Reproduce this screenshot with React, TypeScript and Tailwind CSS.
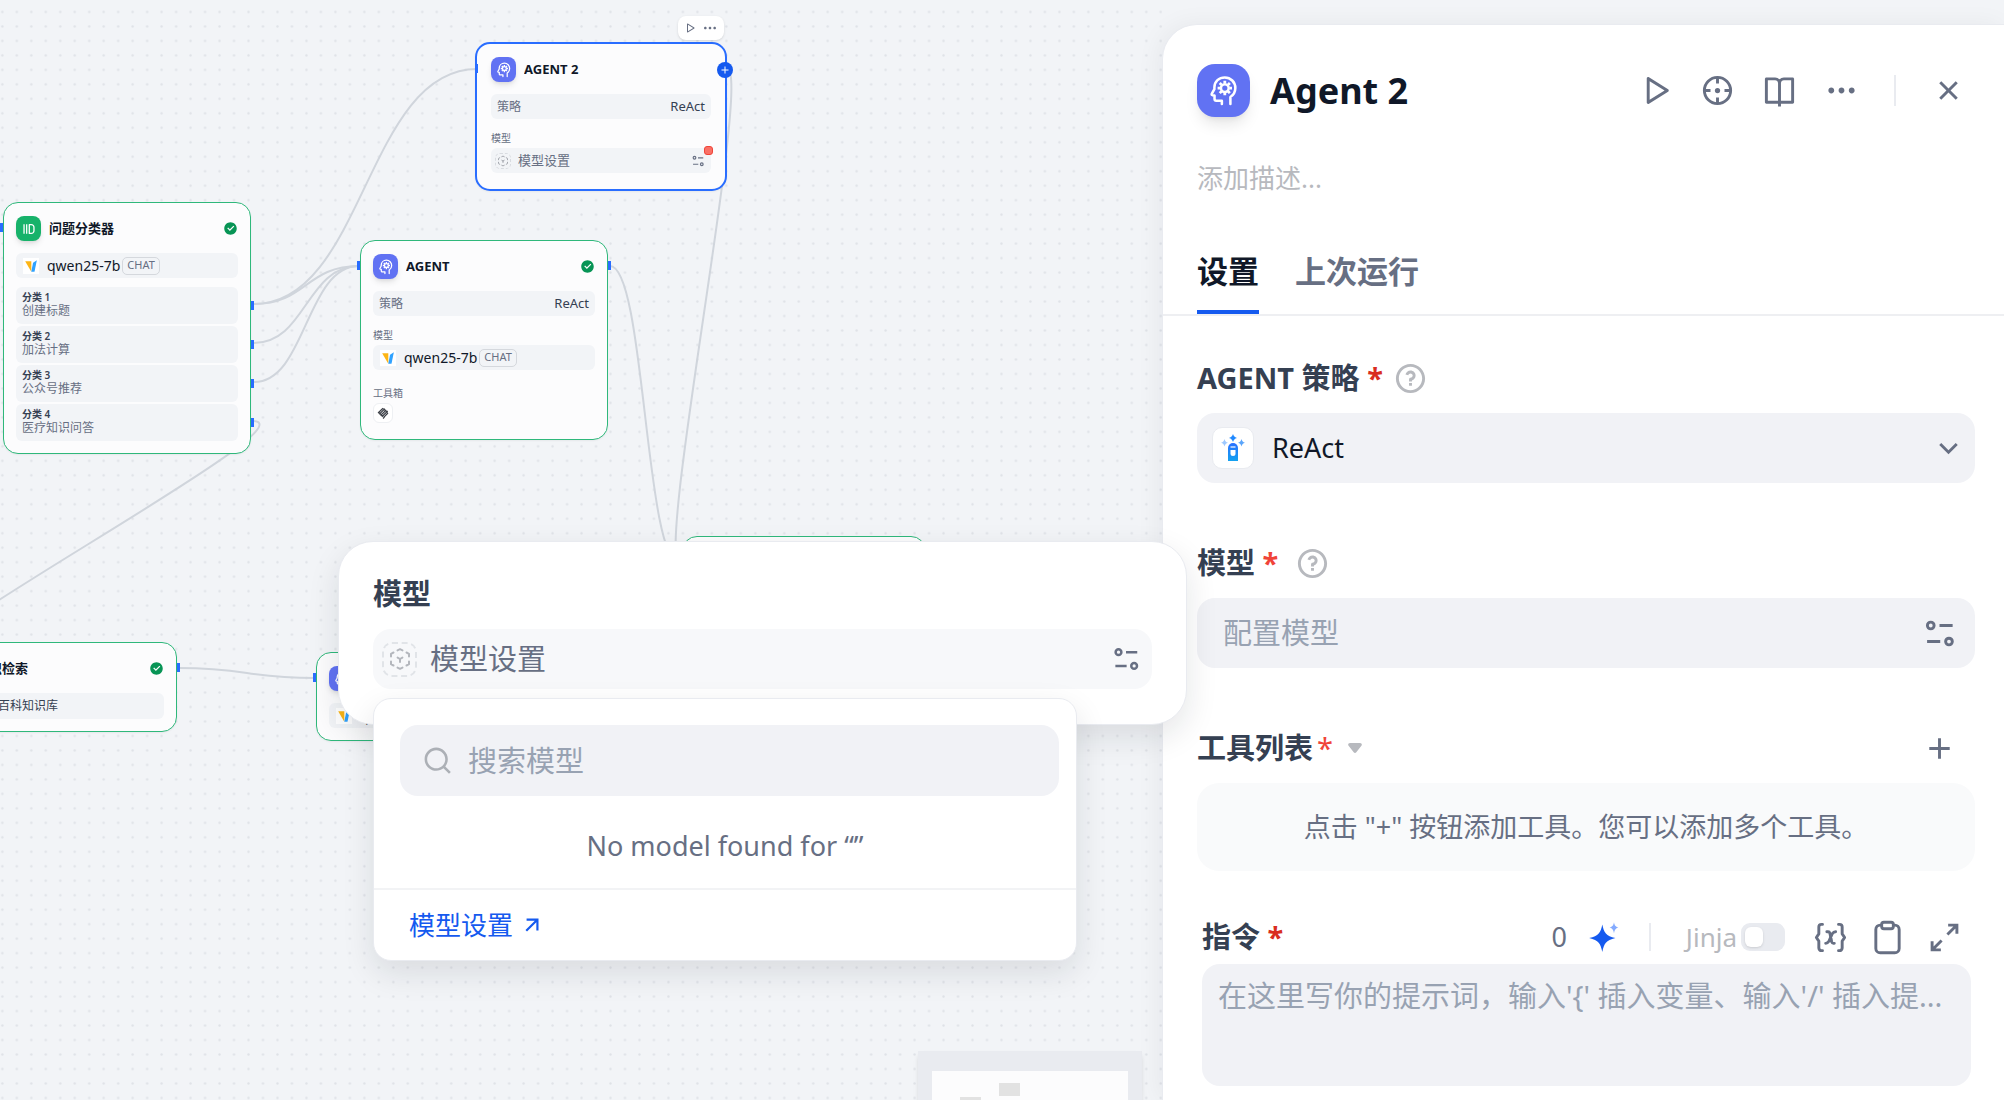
import type { ReactNode } from 'react';
import {
  RiAddLine,
  RiArrowDownSLine,
  RiArrowRightUpLine,
  RiBookOpenLine,
  RiCheckboxCircleFill,
  RiCloseLine,
  RiMoreFill,
  RiPlayLargeLine,
  RiQuestionLine,
  RiSearchLine,
} from 'react-icons/ri';

type IconProps = { className?: string };

const AgentIcon = ({ className }: IconProps) => (
  <svg viewBox="0 0 24 24" fill="none" stroke="currentColor" className={className}>
    <path
      d="M16.8 21.8V16.5C19.2 15 20.5 12.6 20.5 9.8C20.5 5.3 17 1.8 12.6 1.8C8.2 1.8 4.9 4.9 4.8 9.2V10.6L2.8 14.2C2.6 14.7 2.9 15 3.3 15.1L4.9 15.4V18C4.9 18.8 5.4 19.3 6.2 19.3H10.4V21.8"
      strokeWidth="1.9"
      strokeLinejoin="round"
      strokeLinecap="round"
    />
    <circle cx="12.6" cy="9.8" r="2.9" strokeWidth="1.9" />
    <path
      d="M12.6 4.4v2M12.6 13.2v2M7.2 9.8h2M16 9.8h2M8.8 6l1.4 1.4M15 12.2l1.4 1.4M8.8 13.6l1.4-1.4M15 7.4L16.4 6"
      strokeWidth="2.1"
    />
  </svg>
);

const ClassifierIcon = ({ className }: IconProps) => (
  <svg viewBox="0 0 24 24" fill="none" stroke="currentColor" strokeWidth="2.2" className={className}>
    <path
      d="M3.5 4v16M8 4v16M12.5 4.500h3.500a4.500 4.500 0 0 1 4.500 4.500v6a4.500 4.500 0 0 1-4.500 4.500h-3.500z"
      strokeLinejoin="round"
    />
  </svg>
);

const VllmIcon = ({ className }: IconProps) => (
  <svg viewBox="0 0 24 24" className={className}>
    <path d="M2 4h10.5v18z" fill="#fdb515" />
    <path d="M12.5 22L15.500 6.500 22 2l-4 20z" fill="#30a2ff" />
  </svg>
);

const SlidersIcon = ({ className }: IconProps) => (
  <svg viewBox="0 0 24 24" fill="none" stroke="currentColor" strokeWidth="2" className={className}>
    <circle cx="6" cy="6.5" r="2.300" />
    <path d="M12 6.500h9M3.500 17.500h9" />
    <circle cx="18.500" cy="17.500" r="2.300" />
  </svg>
);

const TargetIcon = ({ className }: IconProps) => (
  <svg viewBox="0 0 24 24" fill="none" stroke="currentColor" strokeWidth="2" className={className}>
    <circle cx="12" cy="12" r="9" />
    <path d="M12 3v4.200M12 16.800V21M3 12h4.200M16.800 12H21" />
    <circle cx="12" cy="12" r="1.800" fill="currentColor" stroke="none" />
  </svg>
);

const CubeIcon = ({ className }: IconProps) => (
  <svg
    viewBox="0 0 24 24"
    fill="none"
    stroke="currentColor"
    strokeWidth="2"
    strokeLinecap="round"
    strokeLinejoin="round"
    className={className}
  >
    <path d="M9.500 3.400L12 2.200l2.500 1.200M18.500 5.500L21 6.800v2.700M21 14.500v2.700l-2.500 1.300M14.500 20.600L12 21.800l-2.500-1.200M5.500 18.500L3 17.200v-2.700M3 9.500V6.800l2.500-1.300M12 12l2.400-1.400M12 12l-2.400-1.400M12 12v3" />
  </svg>
);

const SparkleIcon = ({ className }: IconProps) => (
  <svg viewBox="0 0 24 24" className={className}>
    <path
      d="M10.500 3c1.100 5.500 2.500 8 9 9.300-6.500 1.500-7.900 4-9 9.700-1.100-5.700-2.500-8.200-9-9.700 6.500-1.300 7.900-3.800 9-9.300z"
      fill="#155aef"
    />
    <path
      d="M18.500 1.500c.4 2.300 1 3 3 3.700-2 .6-2.600 1.600-3 3.800-.4-2.200-1-3.200-3-3.800 2-.7 2.600-1.400 3-3.700z"
      fill="#84abff"
    />
  </svg>
);

const VariableIcon = ({ className }: IconProps) => (
  <svg
    viewBox="0 0 24 24"
    fill="none"
    stroke="currentColor"
    strokeWidth="2"
    strokeLinecap="round"
    strokeLinejoin="round"
    className={className}
  >
    <path d="M6.500 3H5.800A1.800 1.800 0 0 0 4 4.800v4.700L2.300 12 4 14.500v4.700A1.800 1.800 0 0 0 5.800 21h.7M17.500 3h.7A1.800 1.800 0 0 1 20 4.800v4.700l1.700 2.500-1.700 2.500v4.700a1.800 1.800 0 0 1-1.800 1.800h-.7" />
    <path d="M9.500 8h.8c.7 0 1.100.4 1.300 1l1.200 6c.2.600.6 1 1.200 1h.6M15.500 8c-1.100 0-1.700.5-2.300 1.400l-2.300 5.200c-.6.900-1.200 1.400-2.200 1.400" />
  </svg>
);

const ClipboardIcon = ({ className }: IconProps) => (
  <svg
    viewBox="0 0 24 24"
    fill="none"
    stroke="currentColor"
    strokeWidth="2"
    strokeLinejoin="round"
    className={className}
  >
    <rect x="4" y="3.500" width="16" height="19" rx="3" />
    <rect x="8" y="1.500" width="8" height="4.500" rx="1.500" fill="#fff" />
  </svg>
);

const ExpandIcon = ({ className }: IconProps) => (
  <svg viewBox="0 0 24 24" fill="none" stroke="currentColor" strokeWidth="2" className={className}>
    <path d="M14.500 3.500h6v6M20 4l-6 6M9.500 20.500h-6v-6M4 20l6-6" />
  </svg>
);

const ReactStrategyIcon = ({ className }: IconProps) => (
  <svg viewBox="0 0 24 28" className={className}>
    <defs>
      <linearGradient id="wand" x1="0" y1="0" x2="0" y2="1">
        <stop offset="0" stopColor="#2970ff" />
        <stop offset="1" stopColor="#14a2f0" />
      </linearGradient>
    </defs>
    <path d="M7 27V14a5 5 0 0 1 10 0v13z" fill="url(#wand)" />
    <path d="M9.500 13h5" stroke="#fff" strokeWidth="1.200" />
    <path d="M9.500 16h5v3.500a2.500 2.500 0 0 1-5 0z" fill="#fff" />
    <path
      d="M12 0c.8 2.400 1.600 3.200 4 4-2.400.8-3.200 1.600-4 4-.8-2.400-1.600-3.200-4-4 2.400-.8 3.200-1.600 4-4z"
      fill="#2089ff"
    />
    <path
      d="M3.500 5c.7 2.300 1.400 3 3.500 3.700-2.100.7-2.800 1.400-3.500 3.700C2.800 10.100 2.100 9.400 0 8.700 2.100 8 2.800 7.300 3.500 5z"
      fill="#9ec9ff"
    />
    <path
      d="M20.500 5c.7 2.300 1.400 3 3.500 3.700-2.100.7-2.800 1.400-3.500 3.700-.7-2.300-1.400-3-3.500-3.700 2.100-.7 2.800-1.400 3.500-3.700z"
      fill="#5aa5fb"
    />
  </svg>
);

const ToolIcon = ({ className }: IconProps) => (
  <svg viewBox="0 0 24 24" fill="none" stroke="#3c3f46" strokeWidth="2.200" className={className}>
    <path d="M2 12L12 2.500M4.500 14.500l11-11M7 17L18.500 6M9.500 19.500l12-11.500M13 21l9-9M12 23l3-3M3 10l9 9M13 3l8 8" />
  </svg>
);

type NodeProps = {
  title: string;
  icon?: ReactNode;
  position: string;
  border?: string;
  status?: boolean;
  children?: ReactNode;
};

const Node = ({
  title,
  icon,
  position,
  border = 'border border-[#2fb87b] px-3',
  status = true,
  children,
}: NodeProps) => (
  <div className={`absolute rounded-[15px] bg-[#fcfcfd] pt-[13px] shadow-xs ${border} ${position}`}>
    <div className="flex h-[25px] items-center gap-2">
      {icon}
      <h3 className="flex-1 truncate text-[13px] font-bold text-[#101828]">{title}</h3>
      {status && <RiCheckboxCircleFill className="size-[15px] text-[#079455]" />}
    </div>
    {children}
  </div>
);

const AgentBadge = () => (
  <span className="flex size-[25px] shrink-0 items-center justify-center rounded-lg bg-[#6172f3] text-white shadow-md">
    <AgentIcon className="size-4" />
  </span>
);

const ModelRow = ({ className = '' }: IconProps) => (
  <div className={`flex h-[25px] items-center rounded-md bg-[#f2f4f7] pl-[7px] ${className}`}>
    <span className="flex size-4 items-center justify-center bg-white">
      <VllmIcon className="size-3.5" />
    </span>
    <span className="ml-2 text-[14px] text-[#101828]">qwen25-7b</span>
    <span className="ml-0.5 flex h-[18px] items-center rounded-[5px] border border-[#d5d8dd] px-1 text-[11px] text-[#676f83]">
      CHAT
    </span>
  </div>
);

const StrategyRow = () => (
  <div className="mt-3 flex h-[25px] items-center justify-between rounded-md bg-[#f2f4f7] px-1.5">
    <span className="text-xs text-[#676f83]">策略</span>
    <span className="text-[13px] text-[#354052]">ReAct</span>
  </div>
);

const Handle = ({ className = '' }: IconProps) => (
  <span className={`absolute h-[9px] w-[3px] bg-[#296dff] ${className}`} />
);

const classes = [
  { name: '分类 1', topic: '创建标题' },
  { name: '分类 2', topic: '加法计算' },
  { name: '分类 3', topic: '公众号推荐' },
  { name: '分类 4', topic: '医疗知识问答' },
];

const edges = [
  'M254 304C364 304 366 69 477 69',
  'M254 304C306 304 306 266 359 266',
  'M254 343C306 343 306 266 359 266',
  'M254 382C306 382 306 266 359 266',
  'M252 421C324 421-147 667-75 667',
  'M610 266C645 266 645 564 680 564',
  'M727 69C753 69 654 564 680 564',
  'M179 668C247 668 247 678 315 678',
];

const Canvas = () => (
  <main className="relative min-w-0 flex-1 overflow-hidden">
    <svg className="absolute inset-0 size-full">
      <defs>
        <pattern id="dots" x="-4.900" y="4.700" width="14.480" height="14.480" patternUnits="userSpaceOnUse">
          <circle cx="7.240" cy="7.240" r="1.200" fill="#dfe2e7" />
        </pattern>
      </defs>
      <rect width="100%" height="100%" fill="url(#dots)" />
      {edges.map((d) => (
        <path key={d} d={d} fill="none" stroke="#d0d5dc" strokeWidth="2" />
      ))}
    </svg>

    <Node
      title="问题分类器"
      position="left-[3px] top-[202px] w-[248px] pb-3"
      icon={
        <span className="flex size-[25px] shrink-0 items-center justify-center rounded-lg bg-[#17b26a] text-white shadow-md">
          <ClassifierIcon className="size-3.5" />
        </span>
      }
    >
      <ModelRow className="mt-3" />
      <ul className="mt-[9px] flex flex-col gap-0.5">
        {classes.map((item) => (
          <li key={item.name} className="relative h-[37px] rounded-md bg-[#f2f4f7] px-1.5 pt-1">
            <p className="text-[10px] leading-[13px] font-semibold text-[#354052]">{item.name}</p>
            <p className="text-xs leading-[13px] text-[#676f83]">{item.topic}</p>
            <Handle className="top-[14px] -right-4" />
          </li>
        ))}
      </ul>
      <Handle className="top-5 -left-1" />
    </Node>

    <Node title="AGENT" position="left-[360px] top-[240px] w-[248px] pb-4" icon={<AgentBadge />}>
      <StrategyRow />
      <p className="mt-[11px] text-[10px] leading-4 text-[#676f83]">模型</p>
      <ModelRow className="mt-0.5" />
      <p className="mt-[15px] text-[10px] leading-4 text-[#676f83]">工具箱</p>
      <span className="mt-0.5 flex size-5 items-center justify-center rounded-md border border-[#eef0f3] bg-white">
        <ToolIcon className="size-3" />
      </span>
      <Handle className="top-5 -left-1" />
      <Handle className="top-5 -right-1" />
    </Node>

    <Node
      title="AGENT 2"
      position="left-[475px] top-[42px] w-[252px] pb-4"
      border="border-2 border-[#296dff] px-3.5"
      status={false}
      icon={<AgentBadge />}
    >
      <StrategyRow />
      <p className="mt-[11px] text-[10px] leading-4 text-[#676f83]">模型</p>
      <div className="relative mt-0.5 flex h-[25px] items-center rounded-md bg-[#f2f4f7] pr-1.5 pl-1 text-[#676f83]">
        <span className="flex size-4 items-center justify-center rounded-[5px] border border-dashed border-[#d8dbe0] text-[#a6a9b0]">
          <CubeIcon className="size-3" />
        </span>
        <span className="ml-[7px] flex-1 text-[13px]">模型设置</span>
        <SlidersIcon className="size-3.5" />
        <span className="absolute -top-0.5 -right-0.5 size-[9px] rounded-[3px] border border-[#f04438] bg-[#f97066]" />
      </div>
      <Handle className="top-5 -left-0.5" />
      <button
        type="button"
        aria-label="添加节点"
        className="absolute top-[18px] -right-2 flex size-4 items-center justify-center rounded-full bg-[#155aef] text-white"
      >
        <RiAddLine className="size-3" />
      </button>
    </Node>
    <div className="absolute top-4 left-[678px] flex h-6 w-[46px] items-center justify-between rounded-lg bg-white px-1.5 text-[#676f83] shadow-sm">
      <button type="button" aria-label="运行节点">
        <RiPlayLargeLine className="size-3" />
      </button>
      <button type="button" aria-label="更多">
        <RiMoreFill className="size-4" />
      </button>
    </div>

    <Node title="知识检索" position="-left-[70px] top-[642px] w-[247px] pb-3" icon={<AgentBadge />}>
      <div className="mt-3 flex h-[26px] items-center rounded-md bg-[#f2f4f7] pl-[55px] text-xs text-[#354052]">
        百科知识库
      </div>
      <Handle className="top-5 -right-1" />
    </Node>

    <Node title="AGENT 3" position="left-[316px] top-[652px] w-[248px] pb-3" icon={<AgentBadge />}>
      <ModelRow className="mt-3" />
      <Handle className="top-5 -left-1" />
    </Node>

    <Node title="LLM" position="left-[682px] top-[536px] w-[244px] pb-3" />

    {/* minimap */}
    <div className="absolute top-[1051px] left-[918px] h-[148px] w-[224px] bg-[#e9ebf0] px-3.5 py-5 shadow-md">
      <div className="relative h-full bg-[#fcfcfd]">
        <span className="absolute top-3 left-[67px] h-[13px] w-[21px] bg-[#e2e2e2]" />
        <span className="absolute top-[26px] left-7 h-[13px] w-[21px] bg-[#e2e2e2]" />
      </div>
    </div>
  </main>
);

const Label = ({ htmlFor, children }: { htmlFor?: string; children: ReactNode }) => (
  <label htmlFor={htmlFor} className="text-[29px] leading-9 font-bold text-[#354052]">
    {children}
  </label>
);

const NodePanel = () => (
  <aside className="z-10 mt-6 flex w-[842px] shrink-0 flex-col rounded-tl-[35px] border-t border-l border-[#e9ebf0] bg-white shadow-[-4px_0_24px_rgba(16,24,40,0.05)]">
    <header className="flex items-center pt-[39px] pr-[38px] pl-[34px]">
      <span className="flex size-[53px] items-center justify-center rounded-[18px] bg-[#6172f3] text-white shadow-lg">
        <AgentIcon className="size-8" />
      </span>
      <h2 className="ml-5 flex-1 text-[36px] leading-[53px] font-bold text-[#101828]">Agent 2</h2>
      <div className="flex items-center gap-[27px] text-[#676f83]">
        <button type="button" aria-label="运行此步骤">
          <RiPlayLargeLine className="size-[35px]" />
        </button>
        <button type="button" aria-label="定位节点">
          <TargetIcon className="size-[35px]" />
        </button>
        <button type="button" aria-label="帮助文档">
          <RiBookOpenLine className="size-[35px]" />
        </button>
        <button type="button" aria-label="更多">
          <RiMoreFill className="size-[35px]" />
        </button>
      </div>
      <span className="mx-[35px] h-[31px] w-0.5 bg-[#e9ebf0]" />
      <button type="button" aria-label="关闭" className="text-[#676f83]">
        <RiCloseLine className="size-[35px]" />
      </button>
    </header>

    <p className="mt-[43px] pl-[34px] text-[26px] leading-9 text-[#b7b9be]">添加描述...</p>

    <nav className="mt-[53px] flex gap-9 border-b-2 border-[#eeeff2] pl-[34px] text-[31px] leading-[44px] font-bold">
      <button type="button" className="border-b-4 border-[#155aef] pb-[17px] text-[#101828]">
        设置
      </button>
      <button type="button" className="border-b-4 border-transparent pb-[17px] text-[#676f83]">
        上次运行
      </button>
    </nav>

    <form className="flex flex-col pt-11 pr-[29px] pl-[34px]">
      <div className="flex items-center">
        <Label htmlFor="strategy">
          AGENT 策略 <span className="text-[#d92d20]">*</span>
        </Label>
        <RiQuestionLine className="ml-2.5 size-[35px] text-[#b7b9be]" />
      </div>
      <div className="mt-[17px] flex h-[70px] items-center rounded-[18px] bg-[#f1f2f6] pr-[9px] pl-[15px]">
        <span className="flex size-[42px] items-center justify-center rounded-[10px] border border-[#e9ebf0] bg-white">
          <ReactStrategyIcon className="h-7 w-6" />
        </span>
        <select id="strategy" className="ml-[18px] flex-1 appearance-none bg-transparent text-[27px] text-[#101828]">
          <option>ReAct</option>
        </select>
        <RiArrowDownSLine className="size-[35px] text-[#676f83]" />
      </div>

      <div className="mt-[62px] flex items-center">
        <Label htmlFor="model">
          模型 <span className="text-[#f04438]">*</span>
        </Label>
        <RiQuestionLine className="ml-[17px] size-[35px] text-[#b7b9be]" />
      </div>
      <div className="mt-[17px] flex h-[70px] items-center rounded-[18px] bg-[#f1f2f6] pr-[18px] pl-[26px]">
        <input
          id="model"
          readOnly
          placeholder="配置模型"
          className="min-w-0 flex-1 bg-transparent text-[29px] outline-none placeholder:text-[#98a2b2]"
        />
        <SlidersIcon className="size-[35px] text-[#676f83]" />
      </div>

      <div className="mt-[62px] flex h-9 items-center">
        <h3 className="text-[29px] leading-9 font-bold text-[#354052]">
          工具列表
          <span className="ml-1 font-normal text-[#f04438]">*</span>
        </h3>
        <svg viewBox="0 0 14 10" className="ml-[15px] h-2.5 w-3.5 text-[#b7b9be]">
          <path
            d="M2 0h10c1.600 0 2.400 1.600 1.400 2.800L8.300 9.300c-.7.900-1.900.9-2.600 0L.6 2.800C-.4 1.600.4 0 2 0z"
            fill="currentColor"
          />
        </svg>
        <button type="button" aria-label="添加工具" className="mr-[18px] ml-auto text-[#676f83]">
          <RiAddLine className="size-[35px]" />
        </button>
      </div>
      <p className="mt-[17px] rounded-[22px] bg-[#f9fafb] text-center text-[27px] leading-[88px] text-[#676f83]">
        点击 "+" 按钮添加工具。您可以添加多个工具。
      </p>

      <div className="mt-12 flex h-9 items-center pr-[13px] pl-[5px] text-[#676f83]">
        <Label htmlFor="prompt">
          指令 <span className="text-[#d92d20]">*</span>
        </Label>
        <span className="ml-auto text-[27px]">0</span>
        <button type="button" aria-label="生成提示词" className="ml-5">
          <SparkleIcon className="size-[35px]" />
        </button>
        <span className="mr-[35px] ml-[27px] h-7 w-0.5 bg-[#e9ebf0]" />
        <label htmlFor="jinja" className="text-[26px] text-[#b7b9be]">
          Jinja
        </label>
        <input
          id="jinja"
          type="checkbox"
          className="ml-1 flex h-7 w-[44px] appearance-none items-center rounded-[9px] bg-[#e9ebf0] px-1 before:h-5 before:w-[18px] before:rounded-md before:bg-white before:shadow-sm"
        />
        <button type="button" aria-label="插入变量" className="ml-7">
          <VariableIcon className="size-[35px]" />
        </button>
        <button type="button" aria-label="复制" className="ml-[22px]">
          <ClipboardIcon className="size-[35px]" />
        </button>
        <button type="button" aria-label="展开" className="ml-[22px]">
          <ExpandIcon className="size-[35px]" />
        </button>
      </div>
      <textarea
        id="prompt"
        placeholder="在这里写你的提示词，输入'{' 插入变量、输入'/' 插入提..."
        className="mt-[9px] mr-1 ml-[5px] h-[122px] resize-none overflow-hidden rounded-[18px] bg-[#f1f2f6] px-4 py-3 text-[29px] leading-10 outline-none placeholder:text-[#98a2b2]"
      />
    </form>
  </aside>
);

const ModelPopover = () => (
  <section className="absolute top-[541px] right-[817px] z-20 w-[849px] rounded-[35px] border border-[#e9ebf0] bg-white px-[34px] pt-[34px] pb-[35px] shadow-[0_12px_32px_rgba(16,24,40,0.11)]">
    <h3 className="text-[29px] leading-9 font-bold text-[#354052]">模型</h3>
    <button
      type="button"
      className="mt-[17px] flex h-[60px] w-full items-center rounded-[18px] bg-[#f7f8fa] pr-[11px] pl-[9px] text-left text-[#676f83]"
    >
      <span className="flex size-[35px] items-center justify-center rounded-[10px] border-2 border-dashed border-[#e1e4e8] text-[#b4b7bd]">
        <CubeIcon className="size-6" />
      </span>
      <span className="ml-[13px] flex-1 text-[29px]">模型设置</span>
      <SlidersIcon className="size-[30px]" />
    </button>

    <div className="absolute top-[156px] left-[34px] w-[704px] rounded-[18px] border border-[#e9ebf0] bg-white shadow-[0_12px_32px_rgba(16,24,40,0.11)]">
      <div className="mt-[26px] mr-[17px] ml-[26px] flex h-[71px] items-center rounded-[18px] bg-[#f1f2f6] pl-[22px]">
        <RiSearchLine className="size-[31px] text-[#acb0b6]" />
        <input
          aria-label="搜索模型"
          placeholder="搜索模型"
          className="ml-[15px] min-w-0 flex-1 bg-transparent text-[29px] outline-none placeholder:text-[#98a2b2]"
        />
      </div>
      <p className="pt-9 pb-7 text-center text-[27px] leading-7 text-[#676f83]">No model found for “”</p>
      <div className="border-t-2 border-[#f2f3f5] px-[35px] py-[17px]">
        <a href="#models" className="inline-flex items-center gap-1.5 text-[26px] leading-9 text-[#155aef]">
          模型设置
          <RiArrowRightUpLine className="size-[26px]" />
        </a>
      </div>
    </div>
  </section>
);

const App = () => {
  return (
    <div className="relative flex h-screen overflow-hidden bg-[#f2f4f7] font-['Noto_Sans','Noto_Sans_CJK_SC',sans-serif]">
      <Canvas />
      <NodePanel />
      <ModelPopover />
    </div>
  );
};

export default App;
